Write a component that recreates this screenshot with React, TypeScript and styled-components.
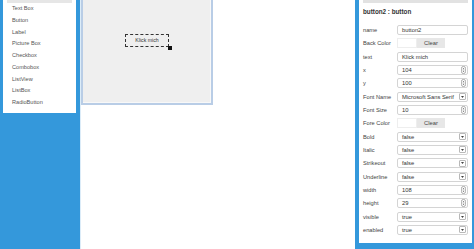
import { FC, Fragment } from 'react';
import styled, { createGlobalStyle } from 'styled-components';

const GlobalStyle = createGlobalStyle`
  html, body {
    margin: 0;
    padding: 0;
    background: #ffffff;
    font-family: 'Liberation Sans', Arial, sans-serif;
  }
`;

const BLUE = '#3498db';

const Page = styled.div`
  display: flex;
  width: 474px;
  height: 249px;
  overflow: hidden;
`;

const Toolbox = styled.div`
  width: 80px;
  box-sizing: border-box;
  padding: 0 4px 0 3px;
  background: ${BLUE};
  flex-shrink: 0;
`;

const ToolList = styled.div`
  background: #ffffff;
  height: 113px;
  box-sizing: border-box;
  padding: 0 4px;
  overflow: hidden;
`;

// the selected entry sits scrolled above the top edge, only its bottom shows
const SelectedStrip = styled.div`
  height: 3px;
  background: #e6e6e6;
`;

const ToolItem = styled.div`
  height: 11.75px;
  line-height: 11.75px;
  padding-left: 5px;
  font-size: 5.6px;
  color: #555;
  white-space: nowrap;
`;

const Designer = styled.div`
  flex: 1;
  background: #ffffff;
  border-left: 1px solid #dcecf8;
`;

const FormWindow = styled.div`
  position: relative;
  width: 132px;
  height: 105px;
  box-sizing: border-box;
  background: #efefef;
  border: 2px solid #b9cde6;
  border-top: 0;
  box-shadow: inset -1px -1px 0 #f8f8f8;
`;

const DesignButton = styled.div`
  position: absolute;
  left: 42px;
  top: 34px;
  width: 44px;
  height: 12.5px;
  box-sizing: border-box;
  border: 1px dashed #333;
  display: flex;
  align-items: center;
  justify-content: center;
  font-size: 5.2px;
  color: #333;
`;

const Handle = styled.span`
  position: absolute;
  right: -4px;
  bottom: -4px;
  width: 4px;
  height: 4px;
  background: #111;
`;

const Inspector = styled.div`
  width: 119px;
  box-sizing: border-box;
  padding: 0 2px 6px 4px;
  background: ${BLUE};
  flex-shrink: 0;
`;

const InspectorPanel = styled.div`
  background: #ffffff;
  height: 243px;
  box-sizing: border-box;
  padding: 0 4px;
`;

const HeaderBar = styled.div`
  height: 3px;
  background: #e2e2e2;
`;

const Title = styled.div`
  height: 18px;
  line-height: 18px;
  font-size: 6.3px;
  font-weight: bold;
  color: #333;
  margin-bottom: 2.33px;
`;

const PropGrid = styled.div`
  display: grid;
  grid-template-columns: 34px 1fr;
  grid-auto-rows: 13.33px;
  align-items: center;
`;

const PropLabel = styled.div`
  font-size: 5.7px;
  color: #444;
  white-space: nowrap;
`;

const Field = styled.div`
  height: 10px;
  box-sizing: border-box;
  border: 1px solid #d4d4d4;
  border-radius: 2px;
  padding: 0 1.5px 0 4px;
  display: flex;
  align-items: center;
  justify-content: space-between;
  font-size: 5.8px;
  color: #333;
  white-space: nowrap;
  overflow: hidden;
`;

const ColorRow = styled.div`
  display: flex;
  height: 10px;
`;

const Swatch = styled.div`
  width: 20px;
  box-sizing: border-box;
  border: 1px solid #eeeeee;
  background: #ffffff;
`;

const ClearButton = styled.div`
  width: 28px;
  background: #e7e7e7;
  display: flex;
  align-items: center;
  justify-content: center;
  font-size: 5.8px;
  color: #444;
`;

const DropBox = styled.span`
  width: 7px;
  height: 7px;
  box-sizing: border-box;
  border: 0.6px solid #b8b8b8;
  border-radius: 1px;
  display: flex;
  align-items: center;
  justify-content: center;
`;

const Spinner: FC = () => (
  <svg width="5" height="8" viewBox="0 0 5 8">
    <rect x="0.4" y="0.4" width="4.2" height="7.2" rx="2.1" fill="none" stroke="#777" strokeWidth="0.6" />
    <path d="M1.5 3.2 L2.5 2 L3.5 3.2 Z" fill="#555" />
    <path d="M1.5 4.8 L2.5 6 L3.5 4.8 Z" fill="#555" />
  </svg>
);

const Dropdown: FC = () => (
  <DropBox>
    <svg width="3" height="2" viewBox="0 0 3 2">
      <path d="M0 0 L3 0 L1.5 2 Z" fill="#444" />
    </svg>
  </DropBox>
);

type Prop =
  | { label: string; kind: 'text' | 'number' | 'select'; value: string }
  | { label: string; kind: 'color' };

const tools = [
  'Text Box',
  'Button',
  'Label',
  'Picture Box',
  'Checkbox',
  'Combobox',
  'ListView',
  'ListBox',
  'RadioButton',
];

const props: Prop[] = [
  { label: 'name', kind: 'text', value: 'button2' },
  { label: 'Back Color', kind: 'color' },
  { label: 'text', kind: 'text', value: 'Klick mich' },
  { label: 'x', kind: 'number', value: '104' },
  { label: 'y', kind: 'number', value: '100' },
  { label: 'Font Name', kind: 'select', value: 'Microsoft Sans Serif' },
  { label: 'Font Size', kind: 'number', value: '10' },
  { label: 'Fore Color', kind: 'color' },
  { label: 'Bold', kind: 'select', value: 'false' },
  { label: 'Italic', kind: 'select', value: 'false' },
  { label: 'Strikeout', kind: 'select', value: 'false' },
  { label: 'Underline', kind: 'select', value: 'false' },
  { label: 'width', kind: 'number', value: '108' },
  { label: 'height', kind: 'number', value: '29' },
  { label: 'visible', kind: 'select', value: 'true' },
  { label: 'enabled', kind: 'select', value: 'true' },
];

const PropControl: FC<{ prop: Prop }> = ({ prop }) => {
  if (prop.kind === 'color') {
    return (
      <ColorRow>
        <Swatch />
        <ClearButton>Clear</ClearButton>
      </ColorRow>
    );
  }
  return (
    <Field>
      <span>{prop.value}</span>
      {prop.kind === 'number' && <Spinner />}
      {prop.kind === 'select' && <Dropdown />}
    </Field>
  );
};

const App: FC = () => {
  return (
    <>
      <GlobalStyle />
      <Page>
        <Toolbox>
          <ToolList>
            <SelectedStrip />
            {tools.map((tool) => (
              <ToolItem key={tool}>{tool}</ToolItem>
            ))}
          </ToolList>
        </Toolbox>
        <Designer>
          <FormWindow>
            <DesignButton>
              Klick mich
              <Handle />
            </DesignButton>
          </FormWindow>
        </Designer>
        <Inspector>
          <InspectorPanel>
            <HeaderBar />
            <Title>button2 : button</Title>
            <PropGrid>
              {props.map((prop) => (
                <Fragment key={prop.label}>
                  <PropLabel>{prop.label}</PropLabel>
                  <PropControl prop={prop} />
                </Fragment>
              ))}
            </PropGrid>
          </InspectorPanel>
        </Inspector>
      </Page>
    </>
  );
};

export default App;
